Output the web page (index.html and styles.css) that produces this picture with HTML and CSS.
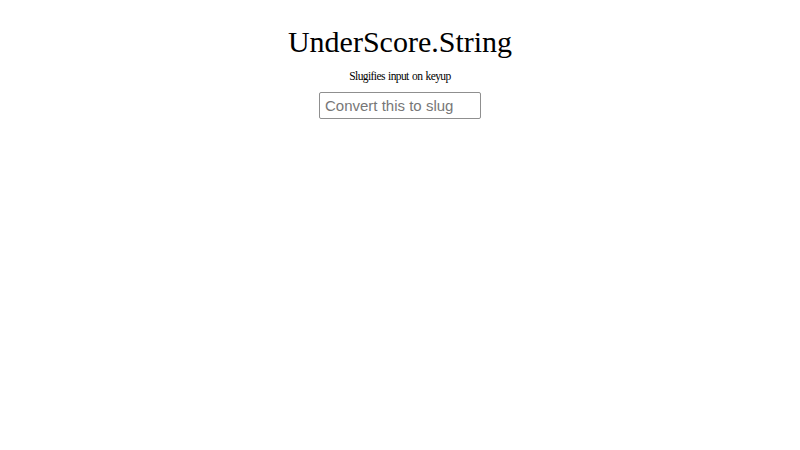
FILE: index.html
```html
<!DOCTYPE html>
<html lang="en">
<head>
  <meta charset="UTF-8">
  <meta name="viewport" content="width=device-width, initial-scale=1.0">
  <title>UnderScore.String</title>
  <link rel="stylesheet" href="styles.css">
</head>
<body>
  <div class="container">
    <h1>UnderScore.String</h1>
    <p class="subtitle">Slugifies input on keyup</p>
    <input type="text" id="slugInput" class="slug-input" placeholder="Convert this to slug">
  </div>
</body>
</html>
```

FILE: styles.css
```css
body {
  font-family: "Liberation Serif", "Times New Roman", serif;
  color: #000;
  background-color: #fff;
  margin: 0;
}

.container {
  display: flex;
  flex-direction: column;
  align-items: center;
  padding-top: 22px;
}

h1 {
  font-size: 30px;
  font-weight: normal;
  margin: 0;
  line-height: 40px;
}

.subtitle {
  font-size: 11.5px;
  letter-spacing: -0.6px;
  word-spacing: 1px;
  line-height: 14px;
  margin: 7px 0 9px;
}

.slug-input {
  width: 162px;
  height: 27px;
  box-sizing: border-box;
  padding: 0 5px;
  border: 1px solid #8f8f8f;
  border-radius: 2px;
  font-family: "Liberation Sans", Arial, sans-serif;
  font-size: 15px;
  color: #333;
}

.slug-input::placeholder {
  color: #777;
}
```
